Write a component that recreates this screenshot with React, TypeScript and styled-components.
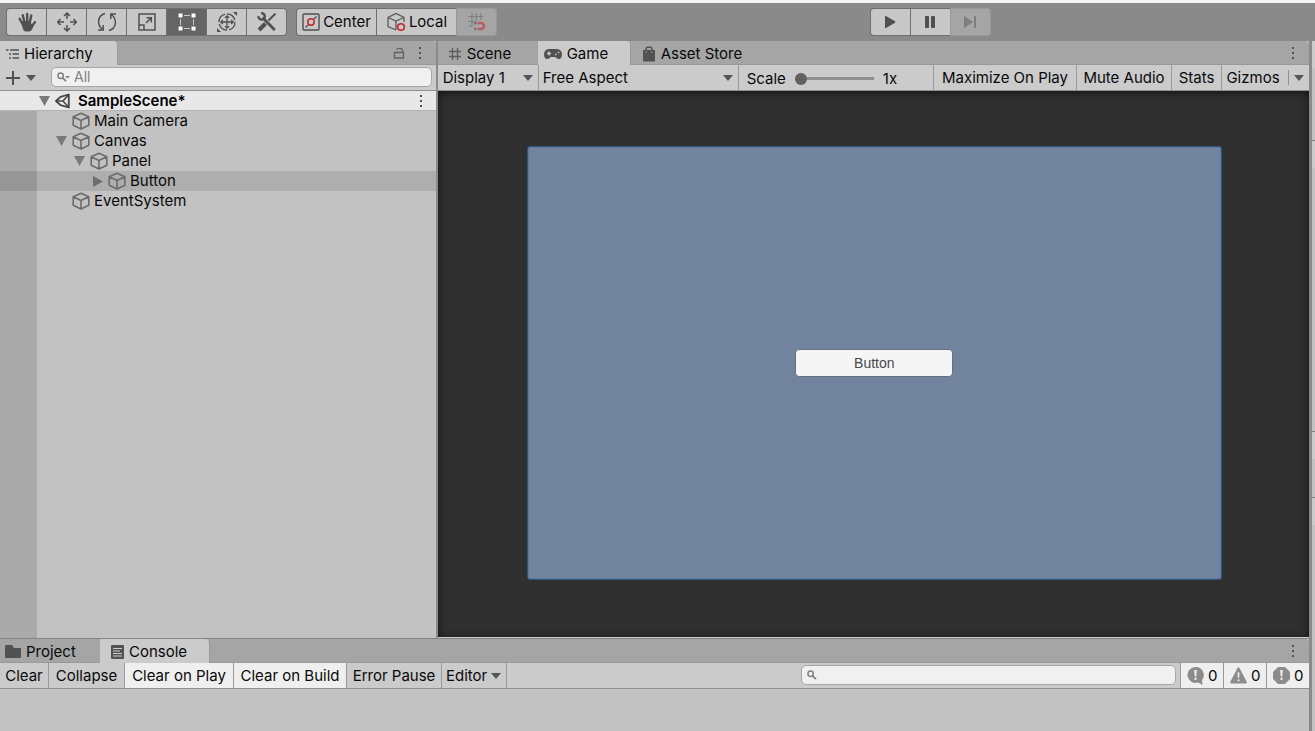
import React from "react";
import styled, { createGlobalStyle, css } from "styled-components";

const GlobalStyle = createGlobalStyle`
  *, *::before, *::after { box-sizing: border-box; }
  body { margin: 0; background: #f4f4f4; }
  body, button, input, select {
    font-family: Inter, "Open Sans", sans-serif;
    font-size: 15px;
    line-height: 20px;
    color: #090909;
  }
  button { border: 0; padding: 0; background: none; white-space: nowrap; }
  h1, ul { margin: 0; padding: 0; }
  svg { display: block; flex: none; }
`;

const Editor = styled.div`
  display: flex;
  flex-direction: column;
  min-height: 100vh;
  padding-top: 3px;
`;

const TopBar = styled.header`
  display: grid;
  grid-template-columns: 19fr auto 7fr;
  align-items: center;
  height: 38px;
  padding: 0 7px;
  background: #8a8a8a;
`;

const ToolSide = styled.div`
  display: flex;
  gap: 11px;
`;

const ButtonGroup = styled.div`
  display: flex;
  gap: 1px;
`;

const ToolButton = styled.button<{ $active?: boolean; $wide?: boolean; $dim?: boolean }>`
  display: flex;
  align-items: center;
  justify-content: center;
  gap: 3px;
  width: ${(p) => (p.$wide ? "79px" : "39px")};
  height: 26px;
  color: ${(p) => (p.$wide ? "#090909" : "#505050")};
  background: ${(p) => (p.$active ? "#656565" : p.$dim ? "#a5a5a5" : "#c8c8c8")};
  box-shadow: 0 0 0 1px ${(p) => (p.$dim ? "#999999" : "#6f6f6f")};
  &:first-child { border-radius: 3px 0 0 3px; }
  &:last-child { border-radius: 0 3px 3px 0; }
`;

const Workspace = styled.div`
  display: flex;
  flex: 1;
  background: #8a8a8a;
`;

const Docks = styled.div`
  display: flex;
  flex-direction: column;
  flex: 1;
  min-width: 0;
`;

const InspectorEdge = styled.aside`
  display: flex;
  flex-direction: column;
  width: 3px;
  margin-left: 3px;
`;

const EdgeSection = styled.div<{ $grow: number }>`
  flex: ${(p) => p.$grow} 0 0;
  background: linear-gradient(#cbcbcb 27px, #c2c2c2 27px);
  border-bottom: 1px solid #7f7f7f;
  &:last-child { border-bottom: 0; }
`;

const UpperDocks = styled.div`
  display: grid;
  grid-template-columns: minmax(0, 1fr) minmax(0, 2fr);
  column-gap: 2px;
  flex: 1;
`;

const Panel = styled.section`
  display: flex;
  flex-direction: column;
  min-width: 0;
  background: #c2c2c2;
`;

const ConsolePanel = styled(Panel)`
  height: 93px;
  border-top: 1px solid #858585;
`;

const TabBar = styled.div`
  display: flex;
  align-items: stretch;
  height: 24px;
  background: #a5a5a5;
  border-bottom: 1px solid #999999;
  border-radius: 0 4px 0 0;
`;

const Tab = styled.button<{ $active?: boolean; $width: number; $inset?: number }>`
  display: flex;
  align-items: center;
  gap: 5px;
  width: ${(p) => p.$width}px;
  padding: 2px 0 0 ${(p) => p.$inset ?? 5}px;
  border-radius: 0 4px 0 0;
  color: #090909;
  ${(p) =>
    p.$active &&
    css`
      margin-bottom: -1px;
      padding-bottom: 1px;
      background: #cbcbcb;
      border-right: 1px solid #999999;
    `}
`;

const TabActions = styled.div`
  display: flex;
  align-items: center;
  gap: 13px;
  margin-left: auto;
  padding-right: 14px;
`;

const IconButton = styled.button`
  display: flex;
  align-items: center;
  color: #515151;
`;

const Bar = styled.div`
  display: flex;
  align-items: stretch;
  height: 26px;
  background: #cbcbcb;
  border-bottom: 1px solid #8f8f8f;
`;

const CreateButton = styled.button`
  display: flex;
  align-items: center;
  gap: 5px;
  width: 51px;
  padding-left: 5px;
`;

const SearchBox = styled.label<{ $width?: string }>`
  display: flex;
  align-items: center;
  gap: 4px;
  width: ${(p) => p.$width ?? "auto"};
  flex: ${(p) => (p.$width ? "none" : "1")};
  height: 20px;
  margin: 2px 4px 0 0;
  padding: 0 5px;
  background: #f0f0f0;
  border: 1px solid #a6a6a6;
  border-radius: 5px;
`;

const SearchInput = styled.input`
  flex: 1;
  min-width: 0;
  height: 18px;
  padding: 0;
  border: 0;
  outline: 0;
  background: none;
  font-size: 14px;
  &::placeholder { color: #808080; opacity: 1; }
`;

const SceneHeader = styled.div`
  display: flex;
  align-items: center;
  gap: 5px;
  height: 20px;
  padding: 0 13px 0 39px;
  background: #e8e8e8;
  border-bottom: 1px solid #b3b3b3;
`;

const SceneName = styled.h1`
  flex: 1;
  padding-left: 2px;
  font-size: 15px;
  line-height: 19px;
  font-weight: 600;
  color: #000;
`;

const Tree = styled.ul`
  flex: 1;
  list-style: none;
  background: linear-gradient(to right, #aaaaaa 37px, #c2c2c2 37px);
`;

const TreeRow = styled.li<{ $depth: number; $selected?: boolean }>`
  display: flex;
  align-items: center;
  height: 20px;
  padding-left: ${(p) => 38 + p.$depth * 18}px;
  background: ${(p) =>
    p.$selected ? "linear-gradient(to right, #969696 37px, #aeaeae 37px)" : "none"};
`;

const Twist = styled.span`
  display: flex;
  width: 16px;
`;

const RowLabel = styled.span`
  padding-left: 4px;
`;

const DropButton = styled.button<{ $width: string; $inset?: number }>`
  display: flex;
  align-items: center;
  justify-content: space-between;
  width: ${(p) => p.$width};
  padding: 0 5px 0 ${(p) => p.$inset ?? 5}px;
  color: #090909;
  border-right: 1px solid #999999;
`;

const ScaleField = styled.label`
  display: flex;
  align-items: center;
  gap: 9px;
  flex: 1;
  min-width: 0;
  padding: 2px 0 0 8px;
`;

const ScaleRange = styled.input`
  appearance: none;
  width: 79px;
  height: 12px;
  margin: 0;
  background: linear-gradient(#8f8f8f, #8f8f8f) center / 100% 3px no-repeat;
  &::-webkit-slider-thumb {
    appearance: none;
    width: 12px;
    height: 12px;
    border-radius: 50%;
    background: #616161;
  }
`;

const BarRule = styled.span`
  width: 1px;
  background: #999999;
`;

const BarButton = styled.button<{ $on?: boolean; $width: number }>`
  width: ${(p) => p.$width}px;
  color: #090909;
  background: ${(p) => (p.$on ? "#efefef" : "transparent")};
  border-right: 1px solid #999999;
`;

const GizmoGroup = styled.div`
  display: flex;
  align-items: center;
  width: 87px;
`;

const GizmoButton = styled.button`
  width: 62px;
`;

const GizmoMenu = styled.button`
  display: flex;
  align-items: center;
  justify-content: center;
  width: 21px;
  height: 15px;
  margin-left: 4px;
  border-left: 1px solid #8f8f8f;
`;

const GameView = styled.div`
  display: flex;
  align-items: center;
  justify-content: center;
  flex: 1;
  padding: 0 0 2px 2px;
  background: #303030;
  box-shadow: inset 0 2px 10px #141414;
  border-bottom: 1px solid #cbcbcb;
`;

const GameCanvas = styled.div`
  display: flex;
  align-items: center;
  justify-content: center;
  width: 80%;
  aspect-ratio: 8 / 5;
  background: #71839d;
  border: 1px solid #2f5588;
  border-radius: 3px;
  box-shadow: inset 0 0 0 1px #61799b;
`;

const GameButton = styled.button`
  width: 158px;
  height: 28px;
  font-family: "Liberation Sans", Arial, sans-serif;
  font-size: 14px;
  color: #4a4a4a;
  background: #f5f5f5;
  border: 1px solid #66707f;
  border-radius: 4px;
`;

const Spacer = styled.div`
  flex: 1;
`;

const CountButton = styled.button`
  display: flex;
  align-items: center;
  gap: 4px;
  width: 43px;
  padding-left: 6px;
  color: #090909;
  background: #efefef;
  border-left: 1px solid #999999;
`;

const Arrow = ({ w = 10, h = 6, color = "#555" }: { w?: number; h?: number; color?: string }) => (
  <svg width={w} height={h} viewBox="0 0 10 6" preserveAspectRatio="none" aria-hidden>
    <path d="M0 0h10L5 6z" fill={color} />
  </svg>
);

const Dots = () => (
  <svg width="4" height="12" viewBox="0 0 4 12" fill="currentColor" aria-hidden>
    <path d="M1 0h2v2H1zM1 5h2v2H1zM1 10h2v2H1z" />
  </svg>
);

const HandIcon = () => (
  <svg width="20" height="20" viewBox="0 0 20 20" fill="none" stroke="currentColor" strokeLinecap="round" aria-hidden>
    <path d="M7.600 11 5.800 3.200M10.200 10V2M12.600 11l1.700-7.600" strokeWidth="2.400" />
    <path d="M5.500 12 2.600 6.800M14.600 14.200 18 10.200" strokeWidth="2.300" />
    <path d="M4.300 10C5 13.500 5.600 19.500 9 19.500h3c2.600 0 3.600-3.200 5-6.200L14 11.500l-.5-2.500H5.300z" fill="currentColor" stroke="none" />
  </svg>
);

const MoveIcon = () => (
  <svg width="20" height="20" viewBox="0 0 20 20" fill="none" stroke="currentColor" strokeWidth="1.500" aria-hidden>
    <path d="M10 1.500V7M10 13v5.500M1 10h6M13 10h6M7 4l3-3 3 3M7 16l3 3 3-3M3.500 7l-3 3 3 3M16.500 7l3 3-3 3" />
  </svg>
);

const RotateIcon = () => (
  <svg width="20" height="20" viewBox="0 0 20 20" fill="none" stroke="currentColor" strokeWidth="1.500" aria-hidden>
    <path d="M8 1.500C.5 3.500-.5 12.500 5.500 17.500M1 18h5.200v-5M12 18.500C19.500 16.500 20.500 7.500 14.500 2.500M19 2h-5.200v5" />
  </svg>
);

const ResizeIcon = () => (
  <svg width="18" height="18" viewBox="0 0 18 18" fill="none" stroke="currentColor" strokeWidth="1.500" aria-hidden>
    <path d="M1 1h16v16H1zM1 12h5v5M8 10l5-5M8.500 4.800h4.800v4.800" />
  </svg>
);

const RectIcon = () => (
  <svg width="18" height="18" viewBox="0 0 18 18" aria-hidden>
    <path d="M2.500 6v6M15.500 6v6M6 2.500h6M6 15.500h6" stroke="#c8c8c8" strokeWidth="1" />
    <path d="M.5.5h4v4h-4zM13.500.5h4v4h-4zM.5 13.500h4v4h-4zM13.500 13.500h4v4h-4z" fill="#fff" />
  </svg>
);

const TransformIcon = () => (
  <svg width="20" height="20" viewBox="0 0 20 20" fill="none" stroke="currentColor" strokeWidth="1.300" aria-hidden>
    <circle cx="10" cy="10" r="8" strokeDasharray="10.500 2" />
    <path d="M10 4v12M4 10h12M8 5.800l2-2 2 2M8 14.200l2 2 2-2M5.800 8l-2 2 2 2M14.200 8l2 2-2 2" />
    <path d="M16 0h4v4zM0 16v4h4z" fill="currentColor" stroke="none" />
  </svg>
);

const CustomToolsIcon = () => (
  <svg width="20" height="20" viewBox="0 0 20 20" fill="none" stroke="currentColor" aria-hidden>
    <path d="M5.500 5.500 17.800 18" strokeWidth="2.800" />
    <path d="M1.500 4a3.200 3.200 0 1 0 2.700-2.700" strokeWidth="2.300" />
    <path d="M18.500 1.500 11.500 8.500" strokeWidth="2" />
    <path d="M8.500 11.500 2 18" strokeWidth="4" />
  </svg>
);

const CenterIcon = () => (
  <svg width="18" height="18" viewBox="0 0 18 18" fill="none" stroke="#4f4f4f" strokeWidth="1.400" aria-hidden>
    <rect x="1" y="1" width="16" height="16" rx="1" />
    <path d="M3.500 14.500 6 12M12 6l2.500-2.500" />
    <circle cx="9" cy="9" r="3.200" stroke="#c4262b" strokeWidth="1.500" />
  </svg>
);

const LocalIcon = () => (
  <svg width="20" height="20" viewBox="0 0 20 20" fill="none" stroke="#5a5a5a" strokeWidth="1.300" aria-hidden>
    <path d="M10 18 2 14.500v-9L10 1.500l8 4V10M2 5.500l8 3.500 8-3.500M10 9v9" />
    <circle cx="15" cy="15" r="3.300" fill="#c8c8c8" stroke="#c4262b" strokeWidth="1.600" />
  </svg>
);

const SnapIcon = () => (
  <svg width="18" height="18" viewBox="0 0 18 18" fill="none" aria-hidden>
    <path d="M0 3.500h15M0 8.500h8M4 0v13M8.500 0v8M13 0v7M0 13h5" stroke="#808080" strokeWidth="1.200" />
    <path d="M9.500 10H13a3 3 0 0 1 0 6H9.500" stroke="#c05a5a" strokeWidth="2.400" />
    <path d="M6 9h2.500v2.400H6zM6 14.800h2.500v2.400H6z" fill="#777" />
  </svg>
);

const PlayIcon = () => (
  <svg width="12" height="14" viewBox="0 0 12 14" fill="currentColor" aria-hidden>
    <path d="M1 1.500Q1 .5 2 1l9 5.200q1 .8 0 1.600L2 13q-1 .5-1-.5z" />
  </svg>
);

const PauseIcon = () => (
  <svg width="12" height="12" viewBox="0 0 12 12" fill="currentColor" aria-hidden>
    <rect x="1" width="4" height="12" rx="1" />
    <rect x="7" width="4" height="12" rx="1" />
  </svg>
);

const StepIcon = () => (
  <svg width="14" height="12" viewBox="0 0 14 12" fill="#7e7e7e" aria-hidden>
    <path d="M1 0l9 6-9 6zM11 0h2v12h-2z" />
  </svg>
);

const ListIcon = () => (
  <svg width="14" height="12" viewBox="0 0 14 12" fill="none" stroke="#515151" strokeWidth="1.400" aria-hidden>
    <path d="M1 2h2.500M5 2h9M4 6h2M7.500 6H14M4 10h2M7.500 10H14" />
  </svg>
);

const LockIcon = () => (
  <svg width="12" height="12" viewBox="0 0 12 12" fill="none" stroke="#616161" strokeWidth="1.300" aria-hidden>
    <path d="M1.500 5.500h9v5.500h-9zM3.500 2.500c.5-1.500 6-2 6 1v2" />
  </svg>
);

const PlusIcon = () => (
  <svg width="16" height="16" viewBox="0 0 16 16" stroke="#515151" strokeWidth="2" aria-hidden>
    <path d="M8 1v14M1 8h14" />
  </svg>
);

const SearchIcon = ({ menu }: { menu?: boolean }) => (
  <svg width={menu ? 13 : 10} height="10" viewBox={menu ? "0 0 13 10" : "0 0 10 10"} fill="none" aria-hidden>
    <circle cx="3.600" cy="3.800" r="2.700" stroke="#808080" strokeWidth="1.500" />
    <path d="M5.600 5.800 9 9.200" stroke="#808080" strokeWidth="1.800" />
    {menu && <path d="M8 4h5l-2.500 2.600z" fill="#808080" />}
  </svg>
);

const UnityIcon = () => (
  <svg width="16" height="16" viewBox="0 0 16 16" fill="none" stroke="#444" strokeLinejoin="round" aria-hidden>
    <path d="M5.500 3.800 13.800 1.500v13L5.500 12.200 1 8z" strokeWidth="1.800" />
    <path d="M1.500 8H8M8 8l5-5.500M8 8l5 5.500" strokeWidth="1.500" />
  </svg>
);

const CubeIcon = () => (
  <svg width="18" height="18" viewBox="0 0 18 18" fill="none" stroke="#6c6c6c" strokeWidth="1.600" strokeLinejoin="round" aria-hidden>
    <path d="M9 1.200 16.800 4.800v8.400L9 17 1.200 13.200V4.800zM1.200 4.800 9 8.500l7.800-3.700M9 8.500V17" />
  </svg>
);

const TwistOpen = () => <Arrow w={11} h={10} color="#7a7a7a" />;

const TwistClosed = () => (
  <svg width="11" height="11" viewBox="0 0 11 11" fill="#6e6e6e" aria-hidden>
    <path d="M1 0v11l10-5.500z" />
  </svg>
);

const GridIcon = () => (
  <svg width="14" height="14" viewBox="0 0 14 14" stroke="#5c5c5c" strokeWidth="1.300" aria-hidden>
    <path d="M4.500 1v12M9.500 1v12M1 4.500h12M1 9.500h12" />
  </svg>
);

const GamepadIcon = () => (
  <svg width="18" height="10" viewBox="0 0 18 10" aria-hidden>
    <path d="M5 0h8q5 .5 5 5.500Q17.800 10 14.500 10 13 10 11.500 8h-5Q5 10 3.500 10 .2 10 0 5.500 0 .5 5 0z" fill="#515151" />
    <path d="M5 2.500v4M3 4.500h4M11 5.500h1.600M13.700 3.500h1.600" stroke="#cbcbcb" strokeWidth="1.400" />
  </svg>
);

const BagIcon = () => (
  <svg width="14" height="16" viewBox="0 0 14 16" aria-hidden>
    <path d="M4 6V3q0-1.800 1.500-1.800h3Q10 1.200 10 3v3" fill="none" stroke="#515151" strokeWidth="1.500" />
    <path d="M1 4h12v10.500q0 1-1 1H2q-1 0-1-1z" fill="#515151" />
    <path d="M3.500 6h1.500M9 6h1.500" stroke="#a5a5a5" />
  </svg>
);

const FolderIcon = () => (
  <svg width="16" height="13" viewBox="0 0 16 13" fill="#515151" aria-hidden>
    <path d="M0 1.500Q0 0 1 0h6l2 3h6q1 0 1 1v8q0 1-1 1H1q-1 0-1-1z" />
  </svg>
);

const LogIcon = () => (
  <svg width="13" height="14" viewBox="0 0 13 14" aria-hidden>
    <rect width="13" height="14" rx="1" fill="#515151" />
    <path d="M2 3.500h9M2 6h7M2 8.500h9M2 11h9" stroke="#cbcbcb" />
  </svg>
);

const Bang = () => (
  <>
    <path d="M7.200 3h2.600L9.300 9.500H7.700z" fill="#efefef" />
    <circle cx="8.500" cy="11.800" r="1.200" fill="#efefef" />
  </>
);

const InfoIcon = () => (
  <svg width="17" height="18" viewBox="0 0 17 18" aria-hidden>
    <path d="M8.500 0a8 8 0 1 0 2.500 15.600L15.500 18l-.5-5A8 8 0 0 0 8.500 0z" fill="#8c8c8c" />
    <Bang />
  </svg>
);

const WarningIcon = () => (
  <svg width="17" height="17" viewBox="0 0 17 17" aria-hidden>
    <path d="M7.500 1q1-1.500 2 0l7.300 14q.4 1.500-1 1.500H1.200q-1.400 0-1-1.500z" fill="#8c8c8c" />
    <path d="M7.500 5.500h2l-.4 5.500H7.900z" fill="#efefef" />
    <circle cx="8.500" cy="13.300" r="1.100" fill="#efefef" />
  </svg>
);

const ErrorIcon = () => (
  <svg width="17" height="17" viewBox="0 0 17 17" aria-hidden>
    <path d="M5 0h7l5 5v7l-5 5H5l-5-5V5z" fill="#8c8c8c" />
    <Bang />
  </svg>
);

const objects = [
  { name: "Main Camera", depth: 1 },
  { name: "Canvas", depth: 1, open: true },
  { name: "Panel", depth: 2, open: true },
  { name: "Button", depth: 3, open: false, selected: true },
  { name: "EventSystem", depth: 1 },
];

const transformTools = [
  { name: "Hand", icon: <HandIcon /> },
  { name: "Move", icon: <MoveIcon /> },
  { name: "Rotate", icon: <RotateIcon /> },
  { name: "Scale", icon: <ResizeIcon /> },
  { name: "Rect", icon: <RectIcon />, active: true },
  { name: "Transform", icon: <TransformIcon /> },
  { name: "Custom tools", icon: <CustomToolsIcon /> },
];

const Hierarchy = () => (
  <Panel>
    <TabBar>
      <Tab $active $width={118}>
        <ListIcon />
        Hierarchy
      </Tab>
      <TabActions>
        <IconButton aria-label="Lock"><LockIcon /></IconButton>
        <IconButton aria-label="Hierarchy menu"><Dots /></IconButton>
      </TabActions>
    </TabBar>
    <Bar>
      <CreateButton aria-label="Create">
        <PlusIcon />
        <Arrow />
      </CreateButton>
      <SearchBox>
        <SearchIcon menu />
        <SearchInput placeholder="All" aria-label="Search hierarchy" />
      </SearchBox>
    </Bar>
    <SceneHeader>
      <TwistOpen />
      <UnityIcon />
      <SceneName>SampleScene*</SceneName>
      <IconButton aria-label="Scene menu"><Dots /></IconButton>
    </SceneHeader>
    <Tree>
      {objects.map((o) => (
        <TreeRow key={o.name} $depth={o.depth} $selected={o.selected}>
          <Twist>{o.open === undefined ? null : o.open ? <TwistOpen /> : <TwistClosed />}</Twist>
          <CubeIcon />
          <RowLabel>{o.name}</RowLabel>
        </TreeRow>
      ))}
    </Tree>
  </Panel>
);

const Game = () => (
  <Panel>
    <TabBar>
      <Tab $width={100} $inset={10}>
        <GridIcon />
        Scene
      </Tab>
      <Tab $active $width={93} $inset={6}>
        <GamepadIcon />
        Game
      </Tab>
      <Tab $width={130} $inset={11}>
        <BagIcon />
        Asset Store
      </Tab>
      <TabActions>
        <IconButton aria-label="Game menu"><Dots /></IconButton>
      </TabActions>
    </TabBar>
    <Bar>
      <DropButton $width="101px">
        Display 1
        <Arrow />
      </DropButton>
      <DropButton $width="200px" $inset={4}>
        Free Aspect
        <Arrow />
      </DropButton>
      <ScaleField>
        Scale
        <ScaleRange type="range" min={1} max={5} defaultValue={1} />
        1x
      </ScaleField>
      <BarRule />
      <BarButton $width={143}>Maximize On Play</BarButton>
      <BarButton $width={95}>Mute Audio</BarButton>
      <BarButton $width={50}>Stats</BarButton>
      <GizmoGroup>
        <GizmoButton>Gizmos</GizmoButton>
        <GizmoMenu aria-label="Gizmos menu"><Arrow /></GizmoMenu>
      </GizmoGroup>
    </Bar>
    <GameView>
      <GameCanvas>
        <GameButton>Button</GameButton>
      </GameCanvas>
    </GameView>
  </Panel>
);

const Console = () => (
  <ConsolePanel>
    <TabBar>
      <Tab $width={100}>
        <FolderIcon />
        Project
      </Tab>
      <Tab $active $width={110} $inset={11}>
        <LogIcon />
        Console
      </Tab>
      <TabActions>
        <IconButton aria-label="Console menu"><Dots /></IconButton>
      </TabActions>
    </TabBar>
    <Bar>
      <BarButton $width={49}>Clear</BarButton>
      <BarButton $width={76}>Collapse</BarButton>
      <BarButton $width={109} $on>Clear on Play</BarButton>
      <BarButton $width={113} $on>Clear on Build</BarButton>
      <BarButton $width={95}>Error Pause</BarButton>
      <DropButton $width="65px" $inset={4}>
        Editor
        <Arrow />
      </DropButton>
      <Spacer />
      <SearchBox $width="375px">
        <SearchIcon />
        <SearchInput aria-label="Search console" />
      </SearchBox>
      <CountButton aria-label="Messages"><InfoIcon />0</CountButton>
      <CountButton aria-label="Warnings"><WarningIcon />0</CountButton>
      <CountButton aria-label="Errors"><ErrorIcon />0</CountButton>
    </Bar>
  </ConsolePanel>
);

export default function App() {
  return (
    <>
      <GlobalStyle />
      <Editor>
        <TopBar>
          <ToolSide>
            <ButtonGroup>
              {transformTools.map((t) => (
                <ToolButton key={t.name} aria-label={t.name} $active={t.active}>
                  {t.icon}
                </ToolButton>
              ))}
            </ButtonGroup>
            <ButtonGroup>
              <ToolButton $wide><CenterIcon />Center</ToolButton>
              <ToolButton $wide><LocalIcon />Local</ToolButton>
              <ToolButton aria-label="Grid snapping" $dim disabled><SnapIcon /></ToolButton>
            </ButtonGroup>
          </ToolSide>
          <ButtonGroup>
            <ToolButton aria-label="Play"><PlayIcon /></ToolButton>
            <ToolButton aria-label="Pause"><PauseIcon /></ToolButton>
            <ToolButton aria-label="Step" $dim disabled><StepIcon /></ToolButton>
          </ButtonGroup>
        </TopBar>
        <Workspace>
          <Docks>
            <UpperDocks>
              <Hierarchy />
              <Game />
            </UpperDocks>
            <Console />
          </Docks>
          <InspectorEdge>
            <EdgeSection $grow={99} />
            <EdgeSection $grow={292} />
            <EdgeSection $grow={65} />
            <EdgeSection $grow={234} />
          </InspectorEdge>
        </Workspace>
      </Editor>
    </>
  );
}
